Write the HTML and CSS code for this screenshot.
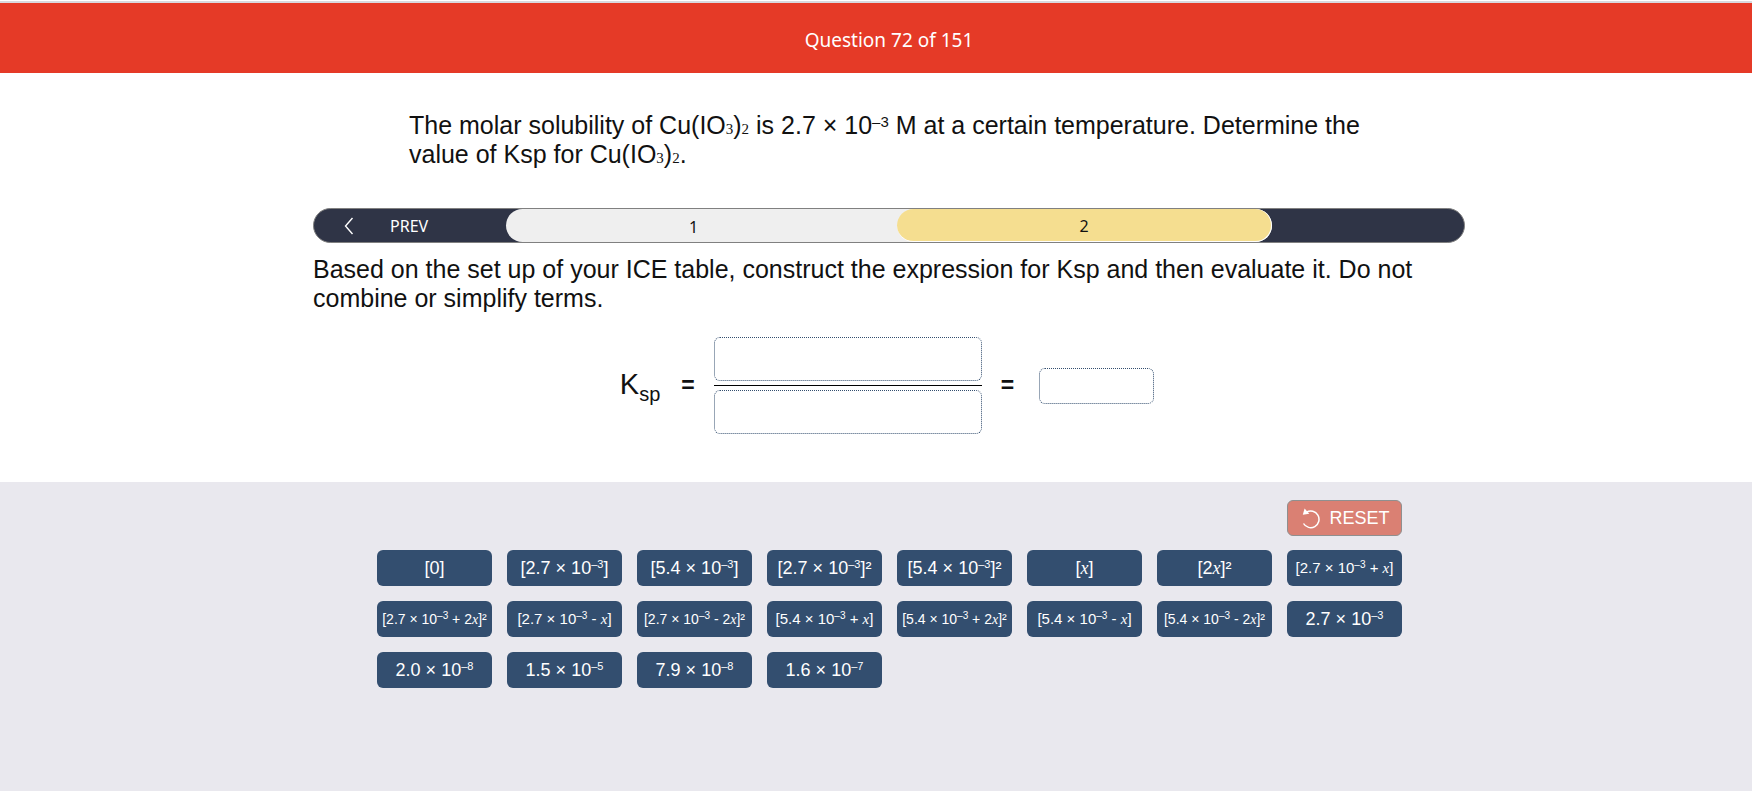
FILE: index.html
```html
<!DOCTYPE html>
<html lang="en">
<head>
    <meta charset="UTF-8">
    <meta name="viewport" content="width=device-width, initial-scale=1.0">
    <title>Question 72 of 151</title>
    <link rel="stylesheet" href="styles.css">
</head>
<body>
    <header class="header">
        <h1>Question 72 of 151</h1>
    </header>

    <main class="question">
        <p class="prompt">The molar solubility of Cu(IO<sub>3</sub>)<sub>2</sub> is 2.7 × 10<sup>–3</sup> M at a certain temperature. Determine the value of Ksp for Cu(IO<sub>3</sub>)<sub>2</sub>.</p>

        <nav class="steps">
            <button class="prev" type="button">
                <svg width="10" height="18" viewBox="0 0 10 18" fill="none" stroke="currentColor" stroke-width="1.4"><path d="M8.5 1 1.5 9l7 8"/></svg>
                <span>PREV</span>
            </button>
            <div class="step-list">
                <button class="step" type="button">1</button>
                <button class="step active" type="button">2</button>
            </div>
        </nav>

        <p class="instruction">Based on the set up of your ICE table, construct the expression for Ksp and then evaluate it. Do not combine or simplify terms.</p>

        <div class="equation">
            <span class="ksp">K<sub>sp</sub></span>
            <span class="equals">=</span>
            <div class="fraction">
                <input class="drop" type="text" aria-label="Numerator" readonly>
                <div class="fraction-line"></div>
                <input class="drop" type="text" aria-label="Denominator" readonly>
            </div>
            <span class="equals">=</span>
            <input class="drop answer" type="text" aria-label="Ksp value" readonly>
        </div>
    </main>

    <section class="bank">
        <div class="bank-inner">
            <button class="reset" type="button">
                <svg width="19" height="21" viewBox="0 0 19 21" fill="none" stroke="currentColor" stroke-width="1.5"><path d="M4.500 4.200A8.300 8.300 0 1 1 1.500 15.500"/><path d="M2.600.5.8 6.700l6.500-.9z" fill="currentColor" stroke="none"/></svg>
                RESET
            </button>
            <div class="tiles">
                <button class="tile" type="button">[0]</button>
                <button class="tile" type="button">[2.7 × 10<sup>–3</sup>]</button>
                <button class="tile" type="button">[5.4 × 10<sup>–3</sup>]</button>
                <button class="tile" type="button">[2.7 × 10<sup>–3</sup>]²</button>
                <button class="tile" type="button">[5.4 × 10<sup>–3</sup>]²</button>
                <button class="tile" type="button">[<i>x</i>]</button>
                <button class="tile" type="button">[2<i>x</i>]²</button>
                <button class="tile medium" type="button">[2.7 × 10<sup>–3</sup> + <i>x</i>]</button>
                <button class="tile small" type="button">[2.7 × 10<sup>–3</sup> + 2<i>x</i>]²</button>
                <button class="tile medium" type="button">[2.7 × 10<sup>–3</sup> - <i>x</i>]</button>
                <button class="tile small" type="button">[2.7 × 10<sup>–3</sup> - 2<i>x</i>]²</button>
                <button class="tile medium" type="button">[5.4 × 10<sup>–3</sup> + <i>x</i>]</button>
                <button class="tile small" type="button">[5.4 × 10<sup>–3</sup> + 2<i>x</i>]²</button>
                <button class="tile medium" type="button">[5.4 × 10<sup>–3</sup> - <i>x</i>]</button>
                <button class="tile small" type="button">[5.4 × 10<sup>–3</sup> - 2<i>x</i>]²</button>
                <button class="tile" type="button">2.7 × 10<sup>–3</sup></button>
                <button class="tile" type="button">2.0 × 10<sup>–8</sup></button>
                <button class="tile" type="button">1.5 × 10<sup>–5</sup></button>
                <button class="tile" type="button">7.9 × 10<sup>–8</sup></button>
                <button class="tile" type="button">1.6 × 10<sup>–7</sup></button>
            </div>
        </div>
    </section>
</body>
</html>
```

FILE: styles.css
```css
* {
    box-sizing: border-box;
}
body {
    margin: 0;
    min-height: 100vh;
    display: flex;
    flex-direction: column;
    background: #fff;
    color: #111;
    font-family: "Liberation Sans", Arial, sans-serif;
    border-top: 1px solid #fff;
}
button {
    font-family: inherit;
    border: none;
    padding: 0;
    cursor: pointer;
}
sup {
    font-size: 11px;
    line-height: 0;
    vertical-align: 6px;
}
.header {
    display: flex;
    align-items: center;
    justify-content: center;
    height: 72px;
    padding: 4px 0 0 26px;
    border-top: 2px solid #d9d9de;
    background: #e53a27;
    color: #fff;
}
.header h1 {
    margin: 0;
    font-family: "Noto Sans", sans-serif;
    font-size: 19px;
    font-weight: 400;
}
.question {
    width: 100%;
    max-width: 1178px;
    margin: 0 auto;
    padding: 38px 0 48px 26px;
}
.prompt, .instruction {
    margin: 0;
    font-size: 25px;
    line-height: 29px;
}
.prompt {
    padding: 0 96px;
}
.prompt sub {
    font-family: "Liberation Serif", serif;
    font-size: 15px;
    line-height: 0;
    vertical-align: baseline;
}
.prompt sup {
    font-size: 15px;
    vertical-align: 7px;
}
.steps {
    display: grid;
    grid-template-columns: 1fr 4fr 1fr;
    height: 35px;
    margin: 39px 0 12px;
    border: 1px solid #808080;
    border-radius: 18px;
    background: #2f3446;
    overflow: hidden;
    font-family: "Noto Sans", sans-serif;
}
.prev {
    display: flex;
    align-items: center;
    gap: 36px;
    padding-left: 30px;
    background: none;
    color: #fff;
    font-size: 16px;
}
.step-list {
    display: flex;
    justify-content: space-between;
    border-radius: 17px;
    background: #efefef;
}
.step {
    width: 49%;
    padding-top: 2px;
    border-radius: 17px;
    background: none;
    color: #111;
    font-size: 16px;
}
.step.active {
    background: #f5de90;
    border: solid #fff;
    border-width: 0 1px 1px 0;
}
.equation {
    display: flex;
    align-items: center;
    justify-content: center;
    margin-top: 24px;
    padding-right: 4px;
}
.ksp {
    margin-right: 2px;
    font-size: 29px;
}
.ksp sub {
    font-size: 20px;
    line-height: 1;
}
.equals {
    padding: 0 19px;
    font-size: 23px;
    font-weight: bold;
}
.fraction {
    width: 268px;
}
.fraction-line {
    height: 1px;
    margin: 4px 0;
    background: #000;
}
.drop {
    display: block;
    width: 100%;
    height: 44px;
    padding: 0 8px;
    border: 1px dotted #334e6f;
    border-radius: 6px;
    background: #fff;
    font-size: 18px;
}
.drop.answer {
    width: 115px;
    height: 36px;
    margin-left: 6px;
}
.bank {
    flex: 1;
    padding: 18px 0 40px 27px;
    background: #e9e8ee;
}
.bank-inner {
    display: flex;
    flex-direction: column;
    gap: 14px;
    max-width: 1025px;
    margin: 0 auto;
}
.reset {
    display: flex;
    align-items: center;
    justify-content: center;
    gap: 8px;
    align-self: flex-end;
    width: 115px;
    height: 36px;
    padding-left: 3px;
    border: 1px solid #8f8f8f;
    border-radius: 6px;
    background: #da8073;
    color: #fff;
    font-size: 18px;
}
.tiles {
    display: grid;
    grid-template-columns: repeat(auto-fill, minmax(115px, 1fr));
    gap: 15px;
}
.tile {
    height: 36px;
    border-radius: 6px;
    background: #334e6f;
    color: #fff;
    font-size: 18px;
    white-space: nowrap;
}
.tile.medium {
    font-size: 15px;
}
.tile.small {
    font-size: 14px;
}
.tile.medium sup, .tile.small sup {
    font-size: 10px;
    vertical-align: 5px;
}
.tile i {
    font-family: "Liberation Serif", serif;
}
```
